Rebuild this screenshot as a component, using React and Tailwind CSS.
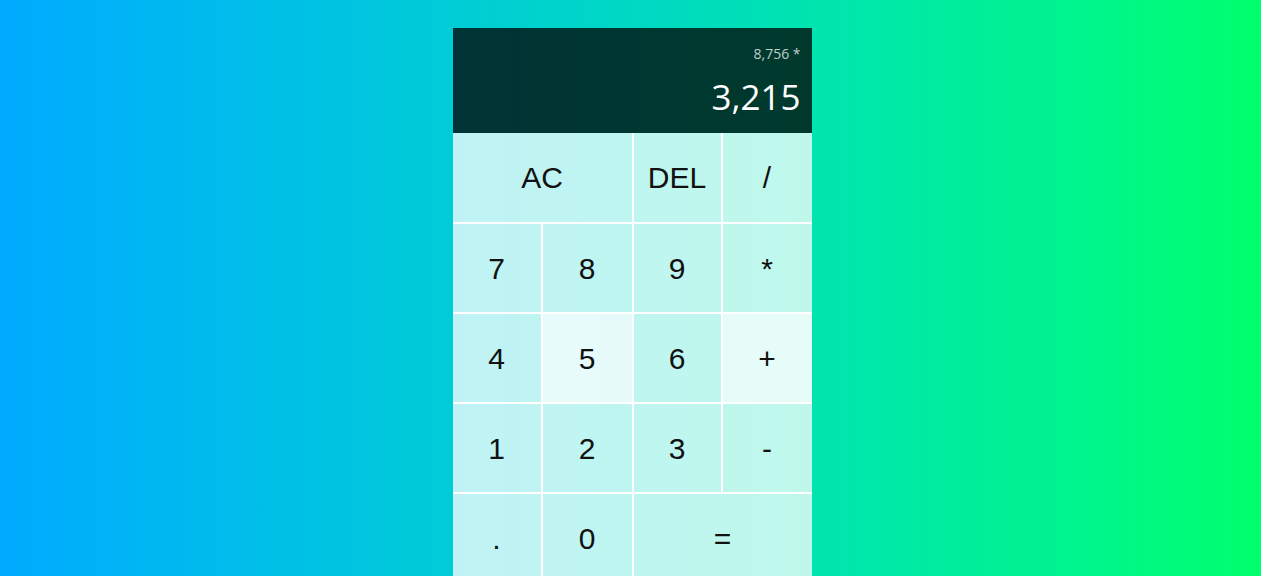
const buttons = [
  { label: 'AC', cls: 'col-span-2' },
  { label: 'DEL', cls: 'border-l-2' },
  { label: '/', cls: 'border-l-2' },
  { label: '7', cls: 'border-t-2' },
  { label: '8', cls: 'border-t-2 border-l-2' },
  { label: '9', cls: 'border-t-2 border-l-2' },
  { label: '*', cls: 'border-t-2 border-l-2' },
  { label: '4', cls: 'border-t-2' },
  { label: '5', cls: 'border-t-2 border-l-2', hot: true },
  { label: '6', cls: 'border-t-2 border-l-2' },
  { label: '+', cls: 'border-t-2 border-l-2', hot: true },
  { label: '1', cls: 'border-t-2' },
  { label: '2', cls: 'border-t-2 border-l-2' },
  { label: '3', cls: 'border-t-2 border-l-2' },
  { label: '-', cls: 'border-t-2 border-l-2' },
  { label: '.', cls: 'border-t-2' },
  { label: '0', cls: 'border-t-2 border-l-2' },
  { label: '=', cls: 'col-span-2 border-t-2 border-l-2' },
]

export default function App() {
  return (
    <div className="h-screen overflow-hidden bg-gradient-to-r from-[#00aaff] to-[#00ff6c] flex justify-center pl-[3px] pt-[28px]">
      <div className="grid grid-cols-[88px_91px_89px_91px] grid-rows-[105px_89px] auto-rows-[90px] w-[359px] content-start">
        {/* Display */}
        <div className="col-span-4 bg-black/75 flex flex-col items-end pr-[11px] pt-4 pb-4 font-['Open_Sans',sans-serif]">
          <div className="text-[14px] leading-5 text-white/75">8,756 *</div>
          <div className="mt-[13px] text-[35px] leading-[40px] text-white">3,215</div>
        </div>

        {buttons.map(({ label, cls, hot }) => (
          <button
            key={label}
            className={`${cls} border-white ${hot ? 'bg-white/90' : 'bg-white/75'} text-[30px] text-[#111] font-['Liberation_Sans',Arial,sans-serif] cursor-pointer`}
          >
            {label}
          </button>
        ))}
      </div>
    </div>
  )
}
